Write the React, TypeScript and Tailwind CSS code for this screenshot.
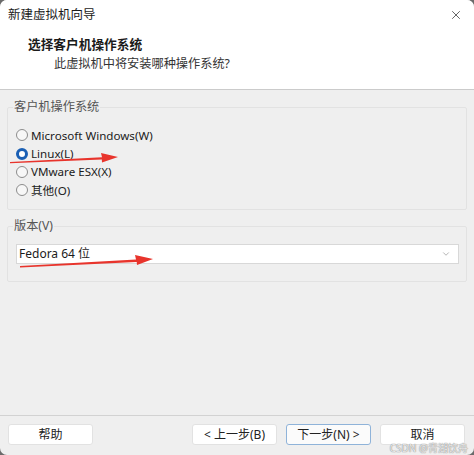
import { ChevronDown, X } from "lucide-react";

const ui = { fontFamily: '"Noto Sans", "Noto Sans CJK SC", sans-serif' };

function Radio({ label, checked }: { label: string; checked?: boolean }) {
  return (
    <div className="flex h-[18.4px] items-center">
      {checked ? (
        <span className="ml-[3px] h-[12px] w-[12px] rounded-full border-[3.5px] border-[#1a5fb4] bg-white" />
      ) : (
        <span className="ml-[3px] h-[12px] w-[12px] rounded-full border border-[#8c8c8c] bg-[#f7f7f7]" />
      )}
      <span className="ml-[3px] text-[11.6px] text-[#1b1b1b]">{label}</span>
    </div>
  );
}

function Button({ label, focused }: { label: string; focused?: boolean }) {
  return (
    <div
      className={
        focused
          ? "flex h-[21px] w-[85px] items-center justify-center rounded-[3px] border border-[#8fb3d9] bg-[#fbfbfb] text-[12px] text-[#222]"
          : "flex h-[21px] w-[85px] items-center justify-center rounded-[3px] border border-[#e2e2e2] bg-white text-[12px] text-[#222]"
      }
    >
      {label}
    </div>
  );
}

export default function App() {
  return (
    <div className="h-[455px] w-[474px] bg-[#6b6b6b]" style={ui}>
      <div className="relative flex h-full w-full flex-col overflow-hidden rounded-[7px] bg-[#efefef]">
        <header className="h-[90px] border-b border-[#cbcbcb] bg-white">
          <div className="flex h-[30px] items-center justify-between pl-[8px] pr-[11px]">
            <span className="text-[12.5px] text-[#1b1b1b]">新建虚拟机向导</span>
            <X className="h-[14px] w-[14px] text-[#333]" strokeWidth={1.3} />
          </div>
          <div className="mt-[6px] pl-[28px] text-[12.7px] font-bold leading-[17px] text-[#1b1b1b]">
            选择客户机操作系统
          </div>
          <div className="mt-[2px] pl-[54px] text-[12.2px] leading-[17px] text-[#333]">
            此虚拟机中将安装哪种操作系统?
          </div>
        </header>

        <fieldset className="mx-[7px] mt-[9px] h-[111px] rounded-[2px] border border-[#e2e2e2] px-[5px]">
          <legend className="px-[1px] text-[12.2px] leading-[16px] text-[#555]">客户机操作系统</legend>
          <div className="mt-[11px]">
            <Radio label="Microsoft Windows(W)" />
            <Radio label="Linux(L)" checked />
            <Radio label="VMware ESX(X)" />
            <Radio label="其他(O)" />
          </div>
        </fieldset>

        <fieldset className="mx-[7px] mt-[8px] h-[64px] rounded-[2px] border border-[#e2e2e2] px-[5px]">
          <legend className="px-[1px] text-[12.2px] leading-[16px] text-[#555]">版本(V)</legend>
          <div className="ml-[3px] mr-[2px] mt-[10px] flex h-[20px] items-center justify-between border border-[#d8d8d8] bg-white pl-[2px] pr-[7px]">
            <span className="text-[12px] text-[#1b1b1b]">Fedora 64 位</span>
            <ChevronDown className="h-[10px] w-[10px] text-[#888]" strokeWidth={1.5} />
          </div>
        </fieldset>

        <div className="flex-1" />

        <footer className="flex h-[40px] items-start border-t border-[#d2d2d2] pl-[8px] pt-[8px]">
          <Button label="帮助" />
          <div className="ml-[99px] flex gap-[9px]">
            <Button label="< 上一步(B)" />
            <Button label="下一步(N) >" focused />
            <Button label="取消" />
          </div>
        </footer>

        <span
          className="absolute bottom-[1px] right-[6px] text-[10px] leading-[12px] text-white/80"
          style={{ textShadow: "0 0 1px #888, 0 0 1px #888" }}
        >
          CSDN @青湖饮舟
        </span>

        <svg className="pointer-events-none absolute left-0 top-0" width="474" height="455">
          <path d="M10 162 L102 157.3 L101 153 L118 157 L102 162.5 L101.8 159.5 L10 163.2 Z" fill="#e8342c" />
          <path d="M20 266 L136 259.5 L135 255 L153 259 L137 265 L136.7 262 L20 267.4 Z" fill="#e8342c" />
        </svg>
      </div>
    </div>
  );
}
